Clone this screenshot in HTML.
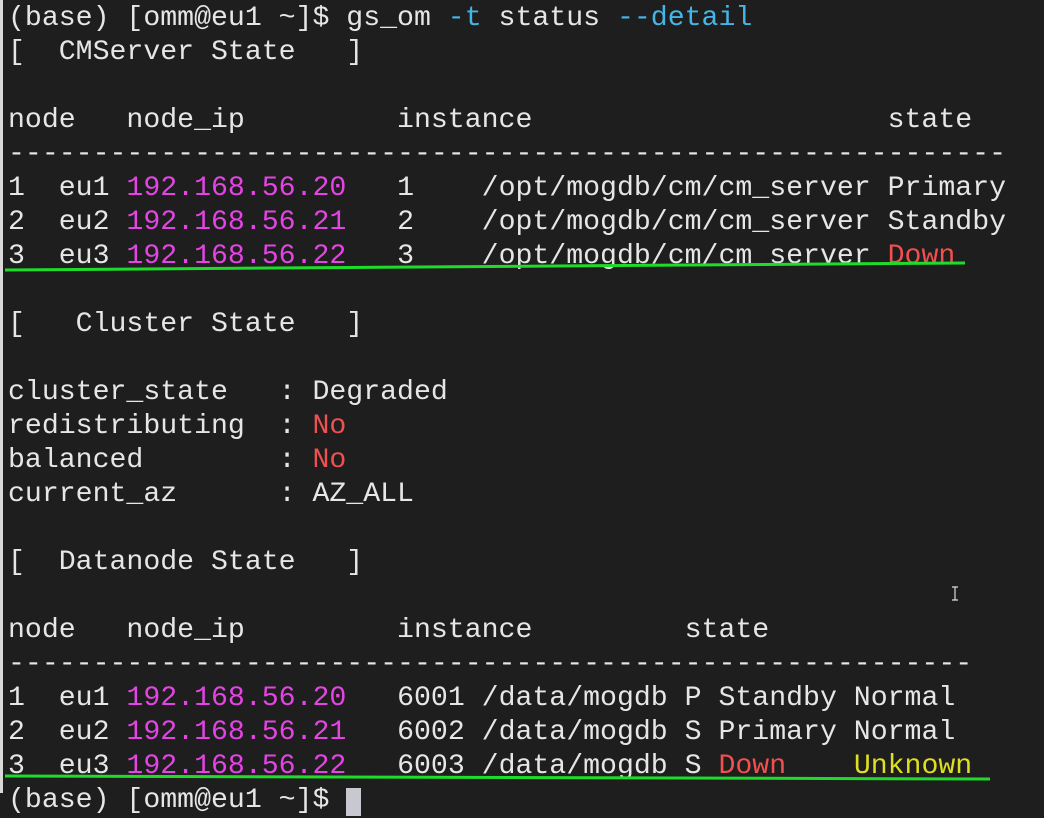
<!DOCTYPE html>
<html><head><meta charset="utf-8"><style>
html,body{margin:0;padding:0;}
body{width:1044px;height:793px;background:#1e1e1e;overflow:hidden;position:relative;}
pre{margin:0;position:absolute;left:8px;top:2px;font-family:"Liberation Mono",monospace;font-size:28.2px;line-height:34px;color:#e6e6e6;white-space:pre;}
.m{color:#e444e4}.r{color:#f0504f}.y{color:#dede22}.c{color:#45b4e6}
.cur{display:inline-block;width:15px;height:28px;background:#c8c8d0;vertical-align:top;margin-top:4px}
.edge{position:absolute;left:0;top:0;width:3px;height:793px;background:#d8d8d8}
</style></head><body>
<div class="edge"></div>
<pre>(base) [omm@eu1 ~]$ gs_om <span class="c">-t</span> status <span class="c">--detail</span>
[  CMServer State   ]

node   node_ip         instance                     state
-----------------------------------------------------------
1  eu1 <span class="m">192.168.56.20</span>   1    /opt/mogdb/cm/cm_server Primary
2  eu2 <span class="m">192.168.56.21</span>   2    /opt/mogdb/cm/cm_server Standby
3  eu3 <span class="m">192.168.56.22</span>   3    /opt/mogdb/cm/cm_server <span class="r">Down</span>

[   Cluster State   ]

cluster_state   : Degraded
redistributing  : <span class="r">No</span>
balanced        : <span class="r">No</span>
current_az      : AZ_ALL

[  Datanode State   ]

node   node_ip         instance         state
---------------------------------------------------------
1  eu1 <span class="m">192.168.56.20</span>   6001 /data/mogdb P Standby Normal
2  eu2 <span class="m">192.168.56.21</span>   6002 /data/mogdb S Primary Normal
3  eu3 <span class="m">192.168.56.22</span>   6003 /data/mogdb S <span class="r">Down</span>    <span class="y">Unknown</span>
(base) [omm@eu1 ~]$ <span class="cur"></span></pre>
<svg width="1044" height="793" style="position:absolute;left:0;top:0">
<path d="M5 270 L965 263" stroke="#1fdc2a" stroke-width="3" fill="none"/>
<path d="M5 776 L990 779" stroke="#1fdc2a" stroke-width="3" fill="none"/>
<path d="M952 587 h6 M955 587 v13 M952 600 h6" stroke="#ddd" stroke-width="1.2" fill="none"/>
</svg>
</body></html>
